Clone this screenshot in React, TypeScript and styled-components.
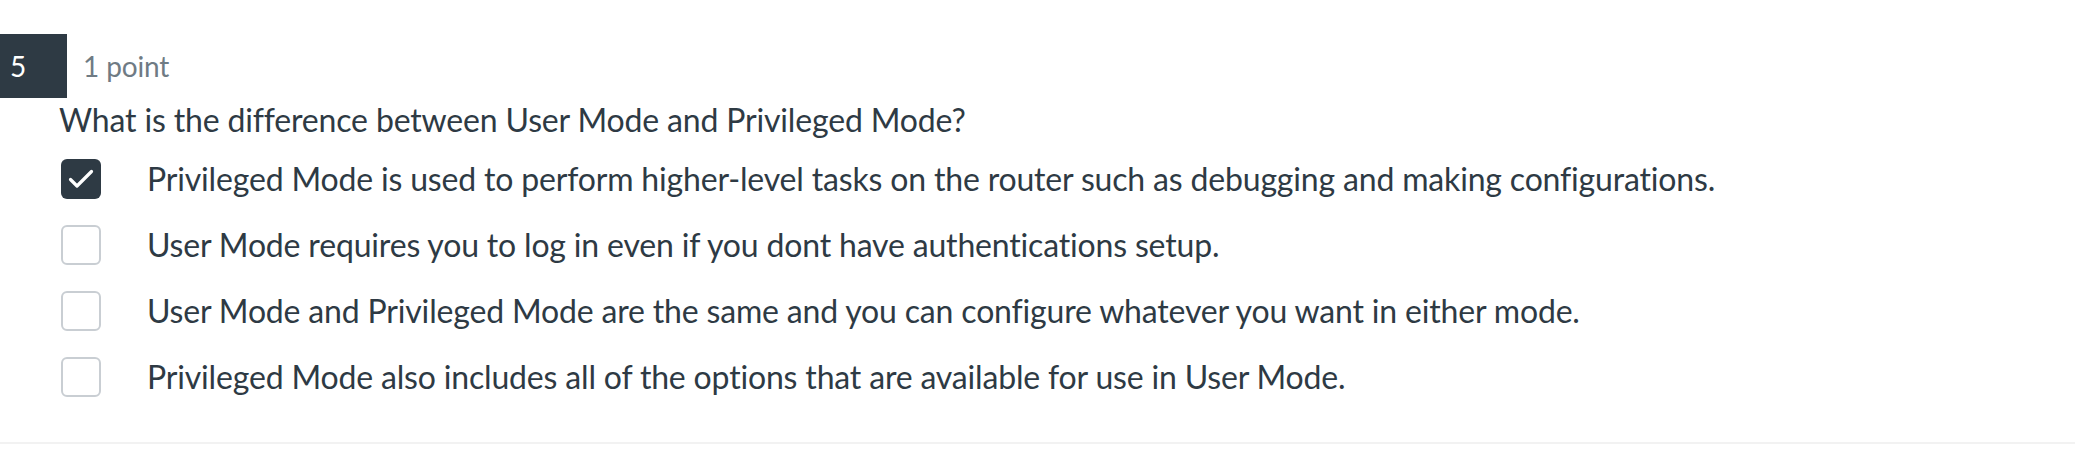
import React from "react";
import styled, { createGlobalStyle } from "styled-components";

const GlobalStyle = createGlobalStyle`
  body {
    margin: 0;
    background: #ffffff;
    font-family: "Lato", "Open Sans", sans-serif;
    color: #2e3a44;
  }
`;

const options = [
  {
    text: "Privileged Mode is used to perform higher-level tasks on the router such as debugging and making configurations.",
    checked: true,
  },
  {
    text: "User Mode requires you to log in even if you dont have authentications setup.",
    checked: false,
  },
  {
    text: "User Mode and Privileged Mode are the same and you can configure whatever you want in either mode.",
    checked: false,
  },
  {
    text: "Privileged Mode also includes all of the options that are available for use in User Mode.",
    checked: false,
  },
];

const App = () => {
  return (
    <>
      <GlobalStyle />
      <Container>
        <Header>
          <Number>5</Number>
          <Points>1 point</Points>
        </Header>
        <Question>What is the difference between User Mode and Privileged Mode?</Question>
        <OptionList>
          {options.map((o) => (
            <Option key={o.text}>
              <Box checked={o.checked}>
                {o.checked && (
                  <svg width="40" height="40" viewBox="0 0 40 40">
                    <polyline
                      points="9.5,20.5 16,27 30.5,12.5"
                      fill="none"
                      stroke="#ffffff"
                      strokeWidth="3.2"
                      strokeLinecap="round"
                      strokeLinejoin="round"
                    />
                  </svg>
                )}
              </Box>
              <OptionText>{o.text}</OptionText>
            </Option>
          ))}
        </OptionList>
        <Divider />
      </Container>
    </>
  );
};

export default App;

const Container = styled.div`
  padding-top: 34px;
  display: flex;
  flex-direction: column;
`;

const Header = styled.div`
  display: flex;
  align-items: center;
  height: 64px;
`;

const Number = styled.div`
  width: 67px;
  height: 64px;
  box-sizing: border-box;
  padding-left: 10px;
  display: flex;
  align-items: center;
  background: #2e3a44;
  color: #ffffff;
  font-size: 28px;
`;

const Points = styled.span`
  margin-left: 16px;
  font-size: 28px;
  letter-spacing: -0.14px;
  color: #6f7b84;
`;

const Question = styled.p`
  margin: 2px 0 0 59px;
  font-size: 32px;
  line-height: 40px;
  letter-spacing: -0.16px;
`;

const OptionList = styled.div`
  margin: 19px 0 0 61px;
  display: flex;
  flex-direction: column;
  gap: 26px;
`;

const Option = styled.label`
  display: flex;
  align-items: center;
  gap: 46px;
  height: 40px;
`;

const Box = styled.span<{ checked: boolean }>`
  width: 40px;
  height: 40px;
  box-sizing: border-box;
  flex-shrink: 0;
  border-radius: 6px;
  background: ${({ checked }) => (checked ? "#2e3a44" : "#ffffff")};
  border: ${({ checked }) => (checked ? "none" : "2px solid #c9ced3")};
  display: flex;
`;

const OptionText = styled.span`
  font-size: 32px;
  line-height: 40px;
  letter-spacing: -0.17px;
`;

const Divider = styled.div`
  margin-top: 45px;
  height: 2px;
  background: #f2f2f2;
`;
